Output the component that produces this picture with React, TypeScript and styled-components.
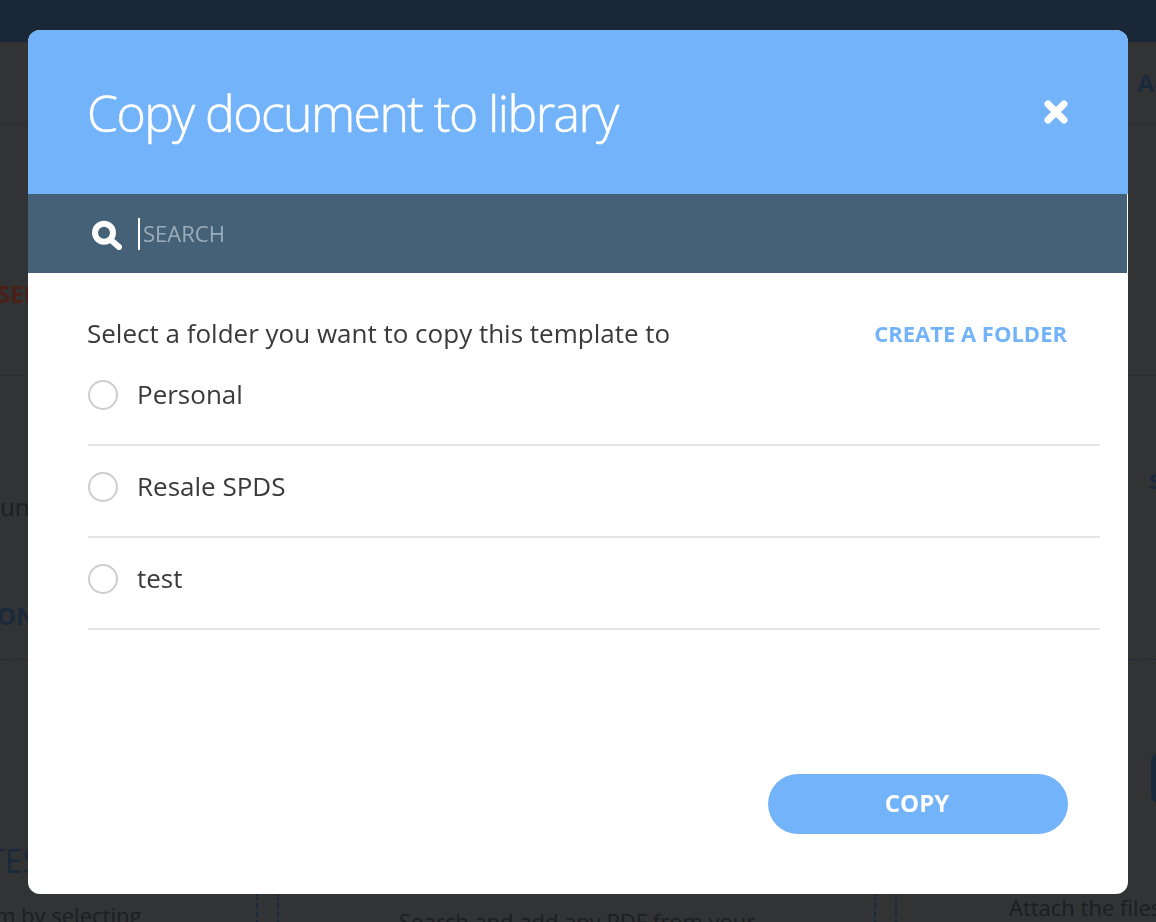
import React from 'react';
import styled, { createGlobalStyle } from 'styled-components';

const Global = createGlobalStyle`
  html, body { margin: 0; padding: 0; background: #323335; }
  body { font-family: "Open Sans", "Liberation Sans", sans-serif; overflow: hidden; }
  * { box-sizing: border-box; }
`;

const Page = styled.div`
  width: 1156px;
  height: 922px;
  overflow: hidden;
  background: #323335;
  display: flex;
  flex-direction: column;
  color: #1d1e20;
`;

const TopBar = styled.div`
  height: 42px;
  background: #1a2736;
  flex: none;
`;

const TabsRow = styled.div`
  height: 82px;
  flex: none;
  border-bottom: 1px solid #2c2d2e;
  display: flex;
  justify-content: flex-end;
  align-items: center;
  font-size: 24px;
  font-weight: 700;
  color: #1a2a3c;
  overflow: hidden;
`;

const TabText = styled.span`
  width: 18.5px;
  white-space: nowrap;
`;

const AlertRow = styled.div`
  height: 252px;
  flex: none;
  border-bottom: 1px solid #2c2d2e;
  padding-top: 156px;
  font-size: 24px;
  font-weight: 700;
  line-height: 28px;
  color: #4a2119;
  margin-left: -3px;
`;

const NoticeRow = styled.div`
  height: 284px;
  flex: none;
  border-bottom: 1px dashed #1a2a3c;
  position: relative;
`;

const NoticeText = styled.div`
  padding-top: 116px;
  font-size: 24px;
  line-height: 30px;
  color: #1d1e20;
`;

const SectionHead = styled.div`
  position: absolute;
  left: -3px;
  top: 226px;
  font-size: 24px;
  font-weight: 700;
  line-height: 28px;
  color: #1a2a3c;
`;

const SideMark = styled.div`
  position: absolute;
  right: -5px;
  top: 90px;
  font-size: 22px;
  font-weight: 700;
  line-height: 28px;
  color: #1a2a3c;
`;

const Steps = styled.div`
  flex: 1;
  display: grid;
  grid-template-columns: 256px 23px 595px 23px 259px;
  position: relative;
`;

const StepCol = styled.div<{ $pad: number }>`
  padding-top: ${(p) => p.$pad}px;
  font-size: 22px;
  line-height: 28px;
  white-space: nowrap;
  overflow: hidden;
`;

const StepTitle = styled.div`
  font-size: 32px;
  line-height: 40px;
  color: #1a2a3c;
  margin: 0 0 20px -13px;
`;

const StepBody = styled.div<{ $left: number }>`
  margin-left: ${(p) => p.$left}px;
`;

const Gutter = styled.div`
  border-left: 2px dashed #1a2a3c;
  border-right: 2px dashed #1a2a3c;
  margin-top: 234px;
`;

const SideButton = styled.div`
  position: absolute;
  right: -20px;
  top: 93px;
  width: 25px;
  height: 50px;
  border-radius: 8px;
  background: #1a2a3c;
`;

const Overlay = styled.div`
  position: fixed;
  inset: 0;
  padding: 30px 28px 28px;
`;

const Modal = styled.div`
  width: 1100px;
  height: 864px;
  background: #fff;
  border-radius: 12px;
  overflow: hidden;
  display: flex;
  flex-direction: column;
`;

const Header = styled.header`
  height: 164px;
  flex: none;
  background: #72b3fa;
  display: flex;
  align-items: center;
  justify-content: space-between;
  padding: 0 59px 0 59px;
`;

const Title = styled.h1`
  margin: 0;
  font-size: 50px;
  font-weight: 300;
  letter-spacing: -1.6px;
  -webkit-text-stroke: 0.5px #fff;
  line-height: 68px;
  color: #fff;
  position: relative;
  top: 1px;
`;

const CloseButton = styled.button`
  width: 26px;
  height: 26px;
  padding: 0;
  border: 0;
  background: none;
  display: block;
  filter: blur(0.5px);
`;

const SearchBand = styled.div`
  height: 79px;
  flex: none;
  width: 1099px;
  background: #446178;
  display: flex;
  align-items: center;
  padding-left: 62px;
`;

const SearchIcon = styled.svg`
  width: 32px;
  height: 32px;
  flex: none;
  margin-top: 4px;
  filter: blur(0.6px);
`;

const Caret = styled.span`
  width: 2px;
  height: 32px;
  background: #fff;
  margin-left: 16px;
  flex: none;
`;

const SearchLabel = styled.span`
  margin: -2px 0 0 3px;
  font-size: 22px;
  color: #9dacb9;
  line-height: 32px;
`;

const Body = styled.div`
  flex: 1;
  display: flex;
  flex-direction: column;
  padding: 40px 60px 60px 60px;
`;

const PromptRow = styled.div`
  display: flex;
  justify-content: space-between;
  align-items: center;
  height: 40px;
  margin-bottom: 1px;
`;

const Prompt = styled.div`
  font-size: 26px;
  color: #3a3a3c;
  margin-left: -1px;
`;

const CreateLink = styled.a`
  font-size: 22px;
  font-weight: 700;
  color: #72b3fa;
  margin-right: 1px;
`;

const FolderList = styled.div`
  margin-right: -32px;
`;

const FolderRow = styled.label`
  height: 92px;
  padding-bottom: 8px;
  border-bottom: 2px solid #e5e5e5;
  display: flex;
  align-items: center;
  gap: 19px;
  font-size: 26px;
  color: #3a3a3c;
`;

const FolderName = styled.span`
  margin-top: -2px;
`;

const Radio = styled.span`
  width: 30px;
  height: 30px;
  border-radius: 50%;
  border: 2px solid #cdcdcd;
  flex: none;
`;

const Footer = styled.div`
  margin-top: auto;
  display: flex;
  justify-content: flex-end;
`;

const CopyButton = styled.button`
  width: 300px;
  height: 60px;
  border: 0;
  border-radius: 30px;
  background: #72b3fa;
  color: #fff;
  font-family: inherit;
  font-size: 24px;
  font-weight: 700;
  padding: 0 2px 4px 0;
`;

const folders = ['Personal', 'Resale SPDS', 'test'];

export default function App() {
  return (
    <>
      <Global />
      <Page>
        <TopBar />
        <TabsRow>
          <TabText>Ac</TabText>
        </TabsRow>
        <AlertRow>SEND</AlertRow>
        <NoticeRow>
          <NoticeText>unt</NoticeText>
          <SectionHead>ONE</SectionHead>
          <SideMark>S</SideMark>
        </NoticeRow>
        <Steps>
          <StepCol $pad={181}>
            <StepTitle>TES</StepTitle>
            <StepBody $left={-5}>m by selecting</StepBody>
          </StepCol>
          <Gutter />
          <StepCol $pad={247}>
            <StepBody $left={120}>Search and add any PDF from your</StepBody>
          </StepCol>
          <Gutter />
          <StepCol $pad={233}>
            <StepBody $left={112}>Attach the files</StepBody>
          </StepCol>
          <SideButton />
        </Steps>
      </Page>
      <Overlay>
        <Modal>
          <Header>
            <Title>Copy document to library</Title>
            <CloseButton aria-label="Close">
              <svg width="26" height="26" viewBox="0 0 26 26">
                <path d="M5 5 L21 21 M21 5 L5 21" stroke="#fff" strokeWidth="7" strokeLinecap="round" />
              </svg>
            </CloseButton>
          </Header>
          <SearchBand>
            <SearchIcon viewBox="0 0 32 32">
              <circle cx="14" cy="12.75" r="9" fill="none" stroke="#fff" strokeWidth="6" />
              <path d="M21.5 20.5 L29 27" stroke="#fff" strokeWidth="6" strokeLinecap="round" />
            </SearchIcon>
            <Caret />
            <SearchLabel>SEARCH</SearchLabel>
          </SearchBand>
          <Body>
            <PromptRow>
              <Prompt>Select a folder you want to copy this template to</Prompt>
              <CreateLink>CREATE A FOLDER</CreateLink>
            </PromptRow>
            <FolderList>
              {folders.map((name) => (
                <FolderRow key={name}>
                  <Radio />
                  <FolderName>{name}</FolderName>
                </FolderRow>
              ))}
            </FolderList>
            <Footer>
              <CopyButton>COPY</CopyButton>
            </Footer>
          </Body>
        </Modal>
      </Overlay>
    </>
  );
}
